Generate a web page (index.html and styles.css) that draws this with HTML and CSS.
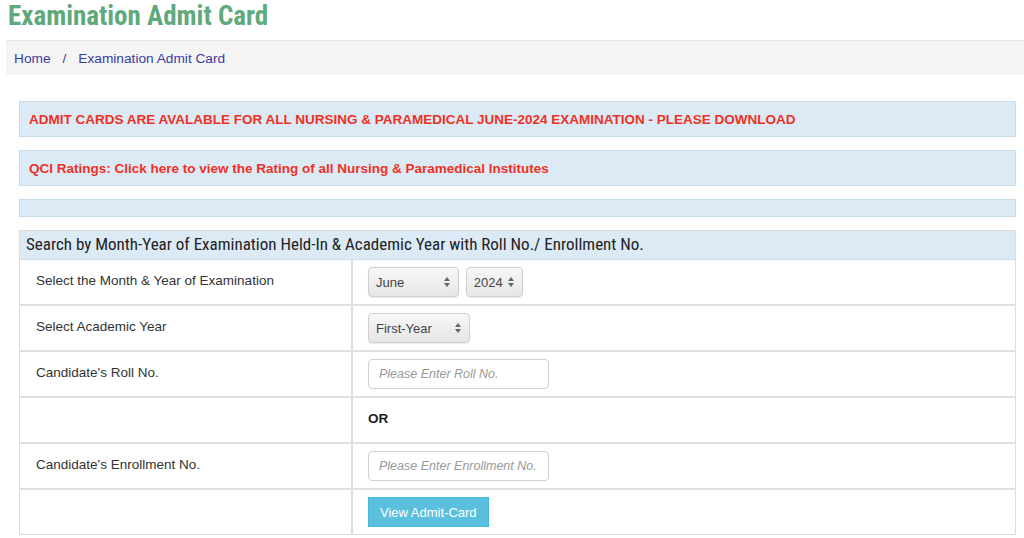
FILE: index.html
```html
<!DOCTYPE html>
<html>
  <head>
    <title>Examination Admit Card</title>
    <link rel="stylesheet" href="styles.css">
  </head>
  <body>
    <h1 class="page-title">Examination Admit Card</h1>

    <div class="breadcrumb">
      <a href="#">Home</a>
      <span class="sep">/</span>
      <a href="#">Examination Admit Card</a>
    </div>

    <div class="content">
      <div class="alert">
        <a href="#">ADMIT CARDS ARE AVALABLE FOR ALL NURSING &amp; PARAMEDICAL JUNE-2024 EXAMINATION - PLEASE DOWNLOAD</a>
      </div>
      <div class="alert">
        <a href="#">QCI Ratings: Click here to view the Rating of all Nursing &amp; Paramedical Institutes</a>
      </div>
      <div class="alert alert-empty"></div>

      <div class="panel">
        <div class="panel-heading">Search by Month-Year of Examination Held-In &amp; Academic Year with Roll No./ Enrollment No.</div>
        <table class="search-table">
          <tr>
            <td class="label">Select the Month &amp; Year of Examination</td>
            <td>
              <div class="fake-select w-month">June<span class="arrows"></span></div>
              <div class="fake-select w-year">2024<span class="arrows"></span></div>
            </td>
          </tr>
          <tr>
            <td class="label">Select Academic Year</td>
            <td>
              <div class="fake-select w-acad">First-Year<span class="arrows"></span></div>
            </td>
          </tr>
          <tr>
            <td class="label">Candidate's Roll No.</td>
            <td><input type="text" placeholder="Please Enter Roll No."></td>
          </tr>
          <tr>
            <td></td>
            <td class="or">OR</td>
          </tr>
          <tr>
            <td class="label">Candidate's Enrollment No.</td>
            <td><input type="text" placeholder="Please Enter Enrollment No."></td>
          </tr>
          <tr>
            <td></td>
            <td><button class="btn-view">View Admit-Card</button></td>
          </tr>
        </table>
      </div>
    </div>
  </body>
</html>
```

FILE: styles.css
```css
body {
  margin: 0;
  padding: 0;
  font-family: "Liberation Sans", Arial, sans-serif;
  font-size: 13.5px;
  color: #333;
  background: #fff;
}

.page-title {
  margin: 0;
  padding: 1px 8px 0;
  height: 39px;
  font-family: "Roboto Condensed", "Liberation Sans Narrow", Roboto, sans-serif;
  font-weight: 700;
  font-size: 27px;
  line-height: 30px;
  color: #5fa97c;
}

.breadcrumb {
  margin-left: 6px;
  height: 34px;
  background: #f5f5f5;
  border-top: 1px solid #e6e6e6;
  display: flex;
  align-items: center;
  padding: 0 8px;
  font-size: 13.7px;
}

.breadcrumb a {
  color: #3b3ba6;
  text-decoration: none;
}

.breadcrumb .sep {
  color: #3b3ba6;
  padding: 0 12px;
}

.content {
  padding: 26px 8px 0 19px;
}

.alert {
  height: 34px;
  background: #dceaf6;
  border: 1px solid #c8dcea;
  display: flex;
  align-items: center;
  padding: 0 9px;
  margin-bottom: 13px;
}

.alert a {
  color: #ee3124;
  font-weight: 700;
  font-size: 13.5px;
  text-decoration: none;
}

.alert-empty {
  height: 16px;
}

.panel {
  border: 1px solid #dcdcdc;
}

.panel-heading {
  height: 29px;
  box-sizing: border-box;
  padding: 0 6px 3px;
  background: #dceaf6;
  border-bottom: 1px solid #c8dcea;
  display: flex;
  align-items: center;
  font-family: "Roboto Condensed", "Liberation Sans Narrow", Roboto, sans-serif;
  font-size: 17px;
  color: #222;
}

.search-table {
  width: 100%;
  border-collapse: collapse;
}

.search-table td {
  height: 44px;
  border: 2px solid #e0e0e0;
  padding: 0 15px;
  vertical-align: middle;
}

/* labels sit a little above the middle of the row */
.search-table td.label,
.search-table td.or {
  height: 40px;
  padding-bottom: 4px;
}

.search-table tr:first-child td {
  border-top: none;
}

.search-table td:first-child {
  border-left: none;
  width: 300px;
  padding-left: 16px;
}

.search-table td:last-child {
  border-right: none;
}

.search-table tr:last-child td {
  border-bottom: none;
}

.fake-select {
  display: inline-flex;
  align-items: center;
  justify-content: space-between;
  box-sizing: border-box;
  height: 30px;
  padding: 0 7px;
  margin-right: 3px;
  border: 1px solid #cfcfcf;
  border-radius: 4px;
  background: linear-gradient(#f7f7f7, #e6e6e6);
  box-shadow: 0 1px 1px rgba(0, 0, 0, 0.08);
  font-size: 13px;
  color: #444;
  vertical-align: middle;
}

.arrows {
  width: 0;
  position: relative;
  height: 10px;
  margin-right: 4px;
}

.arrows::before,
.arrows::after {
  content: "";
  position: absolute;
  left: -3px;
  border-left: 3px solid transparent;
  border-right: 3px solid transparent;
}

.arrows::before {
  top: 0;
  border-bottom: 4px solid #666;
}

.arrows::after {
  bottom: 0;
  border-top: 4px solid #666;
}

.w-month { width: 91px; }
.w-year { width: 57px; }
.w-acad { width: 102px; }

input[type="text"] {
  box-sizing: border-box;
  width: 181px;
  height: 30px;
  border: 1px solid #d0d0d0;
  border-radius: 4px;
  padding: 0 10px;
  font-family: "Liberation Sans", Arial, sans-serif;
  font-size: 12.5px;
}

input::placeholder {
  color: #999;
  font-style: italic;
}

.or {
  font-weight: 700;
  font-size: 13.5px;
  color: #222;
}

.btn-view {
  height: 30px;
  padding: 0 11px;
  background: #5bc0de;
  border: 1px solid #46b8da;
  color: #fff;
  font-family: "Liberation Sans", Arial, sans-serif;
  font-size: 13px;
  cursor: pointer;
}
```
